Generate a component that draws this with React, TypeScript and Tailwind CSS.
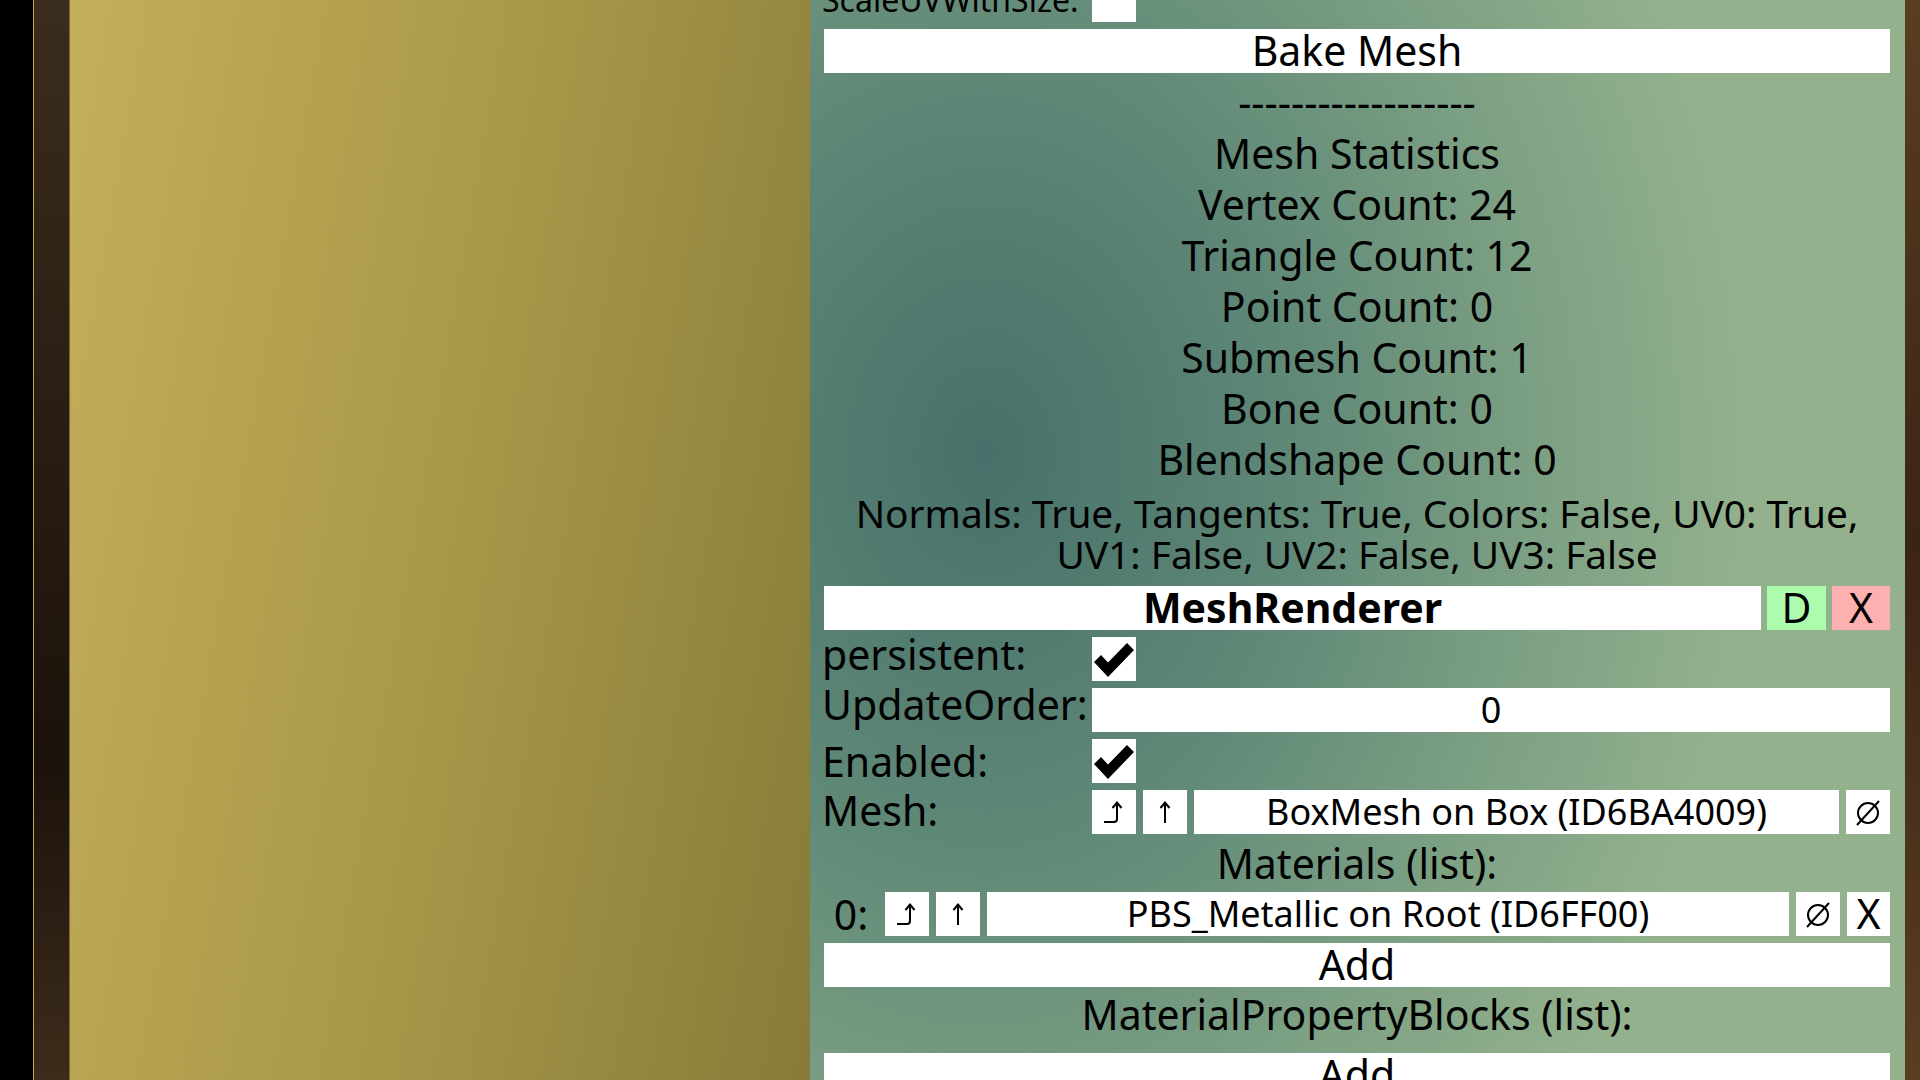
import React from "react";

const font = { fontFamily: '"Noto Sans", "Open Sans", sans-serif' };

function HookIcon() {
  return (
    <svg viewBox="0 0 44 44" className="h-[44px] w-[44px]" fill="none" stroke="black" strokeWidth="2">
      <path d="M12 32 H22 Q25 32 25 29 V13" />
      <path d="M20.5 18 L25 12.5 L29.5 18" />
    </svg>
  );
}

function UpIcon() {
  return (
    <svg viewBox="0 0 44 44" className="h-[44px] w-[44px]" fill="none" stroke="black" strokeWidth="2">
      <path d="M22 13 V33" />
      <path d="M17.5 18 L22 12.5 L26.5 18" />
    </svg>
  );
}

function NullIcon() {
  return (
    <svg viewBox="0 0 44 44" className="h-[44px] w-[44px]" fill="none" stroke="black" strokeWidth="2">
      <ellipse cx="22" cy="23" rx="10" ry="10" />
      <path d="M11 35 L33 11" />
    </svg>
  );
}

function Check() {
  return (
    <div className="flex h-[44px] w-[44px] items-center justify-center bg-white">
      <svg viewBox="0 0 44 44" className="h-[44px] w-[44px]">
        <path d="M2 25 L9 18 L16 25.5 L35 6 L42 13 L16 40 Z" fill="black" />
      </svg>
    </div>
  );
}

function Btn({
  children,
  className = "",
  bg = "bg-white",
}: {
  children?: React.ReactNode;
  className?: string;
  bg?: string;
}) {
  return <div className={"flex h-[44px] items-center justify-center " + bg + " " + className}>{children}</div>;
}

function Line({ children, h = "h-[44px]" }: { children: React.ReactNode; h?: string }) {
  return (
    <div className={"flex items-center justify-center text-[41px] leading-[40px] whitespace-nowrap " + h}>
      {children}
    </div>
  );
}

function Field({
  label,
  size = "text-[41px]",
  lift = "",
  children,
}: {
  label: string;
  size?: string;
  lift?: string;
  children: React.ReactNode;
}) {
  return (
    <div className="flex h-[44px] items-center">
      <div className={"-ml-[2px] w-[270px] shrink-0 leading-[40px] whitespace-nowrap " + size + " " + lift}>{label}</div>
      <div className="flex flex-1 items-center gap-[7px]">{children}</div>
    </div>
  );
}

export default function App() {
  return (
    <div className="flex h-screen w-screen overflow-hidden bg-black text-black" style={font}>
      <div className="w-[33px] shrink-0 bg-black" />
      <div className="w-[37px] shrink-0 border-l border-l-[#c9a653] border-r border-r-[#7a6440] bg-[linear-gradient(to_bottom,#3b2d1d,#1b120b_70%,#3c2c1b)]" />
      <div className="w-[740px] shrink-0 bg-[linear-gradient(100deg,#c4af5a_0%,#a89849_50%,#887b39_100%)]" />
      <div className="flex-1 overflow-hidden pl-[14px] pr-[15px] bg-[radial-gradient(ellipse_70%_90%_at_16%_42%,#47706a_0%,#5f8877_40%,#7fa284_75%,#93b18d_100%)]">
        <div className="-mt-[22px] flex flex-col gap-[7px]">
          <Field label="ScaleUVWithSize:" size="text-[32px]">
            <Btn className="w-[44px]" />
          </Field>
          <Btn className="w-full text-[41px]">Bake Mesh</Btn>
          <Line>------------------</Line>
          <Line>Mesh Statistics</Line>
          <Line>Vertex Count: 24</Line>
          <Line>Triangle Count: 12</Line>
          <Line>Point Count: 0</Line>
          <Line>Submesh Count: 1</Line>
          <Line>Bone Count: 0</Line>
          <Line>Blendshape Count: 0</Line>
          <div className="flex h-[91px] flex-col items-center justify-center text-center text-[38.8px] leading-[41px]">
            <div className="whitespace-nowrap">Normals: True, Tangents: True, Colors: False, UV0: True,</div>
            <div className="whitespace-nowrap">UV1: False, UV2: False, UV3: False</div>
          </div>
          <div className="flex h-[44px] gap-[6px]">
            <Btn className="flex-1 text-[41px] font-bold">MeshRenderer</Btn>
            <Btn className="w-[59px] text-[41px]" bg="bg-[#adfcad]">
              D
            </Btn>
            <Btn className="w-[58px] text-[41px]" bg="bg-[#fdb0b0]">
              X
            </Btn>
          </div>
          <Field label="persistent:" lift="mb-[10px]">
            <Check />
          </Field>
          <Field label="UpdateOrder:" lift="mb-[12px]">
            <Btn className="flex-1 text-[36px]">0</Btn>
          </Field>
          <Field label="Enabled:">
            <Check />
          </Field>
          <Field label="Mesh:" lift="mb-[4px]">
            <Btn className="w-[44px]">
              <HookIcon />
            </Btn>
            <Btn className="w-[44px]">
              <UpIcon />
            </Btn>
            <Btn className="flex-1 text-[36px] whitespace-nowrap">BoxMesh on Box (ID6BA4009)</Btn>
            <Btn className="w-[44px]">
              <NullIcon />
            </Btn>
          </Field>
          <Line>Materials (list):</Line>
          <div className="flex h-[44px] items-center gap-[7px]">
            <div className="w-[54px] text-center text-[41px] leading-[40px]">0:</div>
            <Btn className="w-[44px]">
              <HookIcon />
            </Btn>
            <Btn className="w-[44px]">
              <UpIcon />
            </Btn>
            <Btn className="flex-1 text-[36px] whitespace-nowrap">PBS_Metallic on Root (ID6FF00)</Btn>
            <Btn className="w-[44px]">
              <NullIcon />
            </Btn>
            <Btn className="w-[43px] text-[41px]">X</Btn>
          </div>
          <Btn className="w-full text-[41px]">Add</Btn>
          <Line h="h-[40px]">MaterialPropertyBlocks (list):</Line>
          <Btn className="mt-[12px] w-full text-[41px]">Add</Btn>
        </div>
      </div>
      <div className="w-[15px] shrink-0 bg-[linear-gradient(to_bottom,#5a3e22,#3a2414_50%,#5a3e22)]" />
    </div>
  );
}
